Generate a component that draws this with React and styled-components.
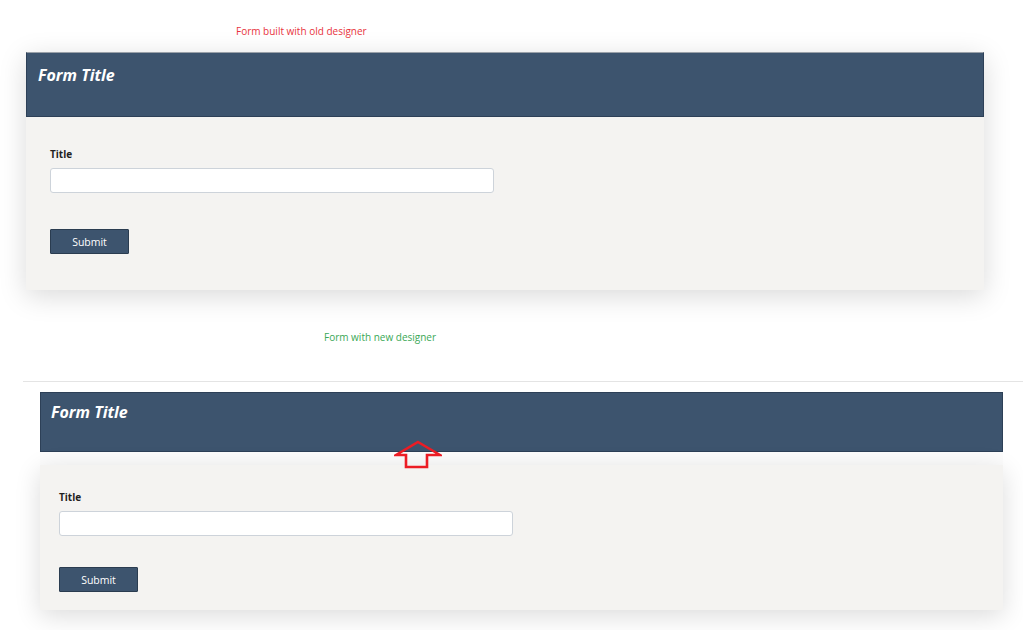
import React from 'react';
import styled, { createGlobalStyle } from 'styled-components';

const GlobalStyle = createGlobalStyle`
  html, body {
    margin: 0;
    padding: 0;
    background: #ffffff;
    font-family: "Open Sans", "Liberation Sans", sans-serif;
  }
`;

const Page = styled.div`
  position: relative;
  width: 1023px;
  height: 630px;
  overflow: hidden;
  background: #ffffff;
`;

const Caption = styled.div`
  font-size: 10px;
  line-height: 14px;
  color: ${(p) => p.color};
  padding-left: ${(p) => p.indent}px;
  padding-top: ${(p) => p.top}px;
`;

const Divider = styled.div`
  margin: ${(p) => p.top}px 0 0 23px;
  border-top: 1px solid #e4e4e4;
`;

const FormCard = styled.div`
  margin: ${(p) => p.top}px 0 0 ${(p) => p.left}px;
  width: ${(p) => p.width}px;
  display: flex;
  flex-direction: column;
  box-shadow: ${(p) => (p.shadow ? '0 6px 26px rgba(0, 0, 0, 0.15)' : 'none')};
`;

const Header = styled.div`
  box-sizing: border-box;
  height: ${(p) => p.height}px;
  background: #3d546e;
  border: 1px solid #2d4057;
  border-top-color: ${(p) => (p.greyTop ? '#9aa1a9' : '#2d4057')};
  padding: ${(p) => p.padTop}px ${(p) => p.padLeft}px 0;
`;

const FormTitle = styled.h1`
  margin: 0;
  font-size: 16px;
  line-height: 20px;
  font-weight: 700;
  font-style: italic;
  color: #ffffff;
`;

const Gap = styled.div`
  height: 13px;
  background: #fcfcfc;
`;

const Body = styled.div`
  box-sizing: border-box;
  height: ${(p) => p.height}px;
  background: #f4f3f1;
  padding: ${(p) => p.padTop}px 0 0 ${(p) => p.padLeft}px;
  box-shadow: ${(p) => (p.shadow ? '0 6px 24px rgba(0, 0, 0, 0.14)' : 'none')};
  display: flex;
  flex-direction: column;
  align-items: flex-start;
`;

const Label = styled.label`
  font-size: 10px;
  line-height: 14px;
  font-weight: 700;
  color: #1f1f1f;
  margin-bottom: 7px;
`;

const Input = styled.input`
  box-sizing: border-box;
  width: ${(p) => p.w}px;
  height: ${(p) => p.h}px;
  background: #ffffff;
  border: 1px solid #cdd3da;
  border-radius: 3px;
  padding: 0 8px;
  outline: none;
`;

const SubmitButton = styled.button`
  box-sizing: border-box;
  margin-top: ${(p) => p.gap}px;
  width: ${(p) => p.w}px;
  height: 25px;
  background: #3d546e;
  border: 1px solid #2a3c50;
  border-radius: 1px;
  color: #ffffff;
  font-family: "Open Sans", "Liberation Sans", sans-serif;
  font-size: 10.5px;
  padding: 0;
`;

const ArrowMark = styled.svg`
  position: absolute;
  left: 394px;
  top: 440px;
`;

const UpArrow = () => (
  <ArrowMark width="48" height="30" viewBox="0 0 48 30">
    <path
      d="M24 2 L46 15 L33 15 L33 27 L12 27 L12 15 L2 15 Z"
      fill="none"
      stroke="#ec1c24"
      strokeWidth="2.6"
      strokeLinejoin="miter"
    />
  </ArrowMark>
);

export default function App() {
  return (
    <Page>
      <GlobalStyle />
      <Caption color="#e8333c" indent={236} top={24}>
        Form built with old designer
      </Caption>

      <FormCard top={14} left={26} width={958} shadow>
        <Header height={65} padTop={12} padLeft={11} greyTop>
          <FormTitle>Form Title</FormTitle>
        </Header>
        <Body height={173} padTop={30} padLeft={24}>
          <Label>Title</Label>
          <Input w={444} h={25} />
          <SubmitButton w={79} gap={36}>Submit</SubmitButton>
        </Body>
      </FormCard>

      <Caption color="#3aa856" indent={324} top={40}>
        Form with new designer
      </Caption>

      <Divider top={37} />

      <FormCard top={10} left={40} width={963}>
        <Header height={60} padTop={9} padLeft={10}>
          <FormTitle>Form Title</FormTitle>
        </Header>
        <Gap />
        <Body height={145} padTop={25} padLeft={19} shadow>
          <Label>Title</Label>
          <Input w={454} h={25} />
          <SubmitButton w={79} gap={31}>Submit</SubmitButton>
        </Body>
      </FormCard>

      <UpArrow />
    </Page>
  );
}
